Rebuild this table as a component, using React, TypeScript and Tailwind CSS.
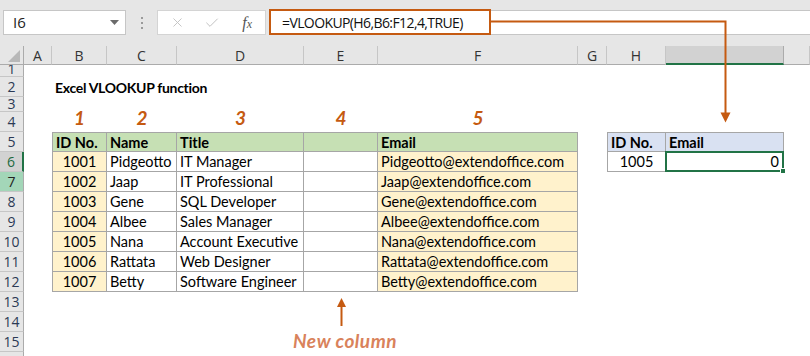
import React from "react";
import { X, Check } from "lucide-react";

const COLS = ["A", "B", "C", "D", "E", "F", "G", "H", "I", "J"];

const people: [number, string, string][] = [
  [1001, "Pidgeotto", "IT Manager"],
  [1002, "Jaap", "IT Professional"],
  [1003, "Gene", "SQL Developer"],
  [1004, "Albee", "Sales Manager"],
  [1005, "Nana", "Account Executive"],
  [1006, "Rattata", "Web Designer"],
  [1007, "Betty", "Software Engineer"],
];

const ROWS = [1, 2, 3, 4, 5, 6, 7, 8, 9, 10, 11, 12, 13, 14, 15, 16];

function RowHeader({ r }: { r: number }) {
  let cls =
    "flex justify-center overflow-hidden border-b border-b-[#c6c6c6] text-[14px] font-['Open_Sans',sans-serif] ";
  if (r === 6) cls += "bg-[#d2d2d2] border-r-2 border-r-[#217346] text-[#1d6a3f]";
  else if (r === 7) cls += "bg-[#a3d6b8] border-r border-r-[#ababab] text-[#222]";
  else cls += "bg-[#e6e6e6] border-r border-r-[#ababab] text-[#2b3a55]";
  if (r === 1 || r === 3) cls += " items-end leading-[14px]";
  else if (r === 16) cls += " items-start leading-[20px]";
  else cls += " items-center leading-[20px]";
  return <div className={cls}>{r === 16 ? "" : r}</div>;
}

function tableBorder(r: number, c: number) {
  let s = "border-r border-b border-[#a6a6a6]";
  if (r === 5) s += " border-t";
  if (c === 1) s += " border-l";
  return s;
}

function rightBorder(r: number, c: number) {
  let s = "border-r border-b border-[#a6a6a6]";
  if (r === 5) s += " border-t";
  if (c === 7) s += " border-l";
  return s;
}

function Cell({ r, c }: { r: number; c: number }) {
  const base =
    "relative flex items-center pt-[1px] text-[14.5px] text-black whitespace-nowrap min-w-0";
  if (r === 2 && c === 1) {
    return (
      <div className={base + " overflow-visible z-10"}>
        <span className="pl-[3px] font-bold text-[14px] tracking-[-0.3px]">
          Excel VLOOKUP function
        </span>
      </div>
    );
  }
  if (r === 4 && c >= 1 && c <= 5) {
    return (
      <div className={base + " justify-center overflow-visible"}>
        <span className="italic font-bold text-[19px] text-[#c55a11] leading-[20px] -mt-[9px]">
          {c}
        </span>
      </div>
    );
  }
  if (r === 5 && c >= 1 && c <= 5) {
    const labels = ["", "ID No.", "Name", "Title", "", "Email"];
    return (
      <div className={base + " bg-[#c6e0b4] font-bold pl-[3px] " + tableBorder(r, c)}>
        {labels[c]}
      </div>
    );
  }
  if (r >= 6 && r <= 12 && c >= 1 && c <= 5) {
    const p = people[r - 6];
    const b = tableBorder(r, c);
    if (c === 1)
      return <div className={base + " bg-[#fff2cc] justify-center " + b}>{p[0]}</div>;
    if (c === 2) return <div className={base + " pl-[3px] " + b}>{p[1]}</div>;
    if (c === 3) return <div className={base + " pl-[3px] " + b}>{p[2]}</div>;
    if (c === 4) return <div className={base + " " + b}></div>;
    return (
      <div className={base + " bg-[#fff2cc] pl-[3px] " + b}>{p[1] + "@extendoffice.com"}</div>
    );
  }
  if (r === 5 && (c === 7 || c === 8)) {
    return (
      <div className={base + " bg-[#d9e1f2] font-bold pl-[3px] " + rightBorder(r, c)}>
        {c === 7 ? "ID No." : "Email"}
      </div>
    );
  }
  if (r === 6 && c === 7) {
    return <div className={base + " justify-center " + rightBorder(r, c)}>1005</div>;
  }
  if (r === 6 && c === 8) {
    return (
      <div className={base + " justify-end pr-[4px] " + rightBorder(r, c)}>
        0
        <div className="absolute -left-[1px] -top-[1px] -right-[1px] -bottom-[1px] border-2 border-[#217346]" />
        <div className="absolute -right-[3px] -bottom-[3px] w-[6px] h-[6px] bg-[#217346] border border-white" />
      </div>
    );
  }
  if (r === 15 && c === 4) {
    return (
      <div className={base + " justify-center overflow-visible z-10"}>
        <span className="italic font-bold text-[19px] text-[#d9825b] tracking-[0.5px] -mt-[3px] ml-[8px]">
          New column
        </span>
      </div>
    );
  }
  return <div className={base}></div>;
}

export default function App() {
  return (
    <div className="relative w-[810px] h-[356px] overflow-hidden bg-white font-['Lato',sans-serif]">
      {/* Formula bar area */}
      <div className="flex h-[46px] bg-[#e6e6e6] pt-[10px] items-start">
        <div className="ml-[3px] w-[123px] h-[25px] bg-white border border-[#c6c6c6] flex items-center justify-between pl-[9px] pr-[6px]">
          <span className="text-[15px] text-[#222] font-['Open_Sans',sans-serif]">I6</span>
          <svg width="9" height="5" viewBox="0 0 9 5">
            <polygon points="0,0 9,0 4.5,5" fill="#6b6b6b" />
          </svg>
        </div>
        <div className="w-[31px] h-[25px] flex flex-col items-center justify-center gap-[3px]">
          <div className="w-[2px] h-[2px] bg-[#9a9a9a]" />
          <div className="w-[2px] h-[2px] bg-[#9a9a9a]" />
          <div className="w-[2px] h-[2px] bg-[#9a9a9a]" />
        </div>
        <div className="w-[109px] h-[25px] bg-white border border-[#d4d4d4] flex items-center">
          <div className="w-[36px] flex justify-center pl-[4px]">
            <X size={15} strokeWidth={1.5} color="#c2c2c2" />
          </div>
          <div className="w-[36px] flex justify-center">
            <Check size={16} strokeWidth={1.5} color="#c2c2c2" />
          </div>
          <div className="w-[36px] flex justify-center">
            <span className="font-['Liberation_Serif',serif] italic text-[16px] text-[#555] leading-none">
              f<span className="text-[12px]">x</span>
            </span>
          </div>
        </div>
        <div className="ml-[3px] flex-1 h-[25px] bg-white border-y border-[#c6c6c6] flex items-center">
          <div className="w-[222px] h-[26px] -mt-[1px] border-2 border-[#c55a11] flex items-center pl-[11px] text-[14px] tracking-[-0.6px] text-[#111] font-['Open_Sans',sans-serif]">
            =VLOOKUP(H6,B6:F12,4,TRUE)
          </div>
        </div>
      </div>

      {/* Sheet grid */}
      <div className="grid grid-cols-[24px_28px_55px_70px_127px_74px_200px_29px_59px_118px_26px] grid-rows-[19px_12px_20px_15px_20px_20px_20px_20px_20px_20px_20px_20px_20px_20px_20px_20px_20px]">
        <div className="relative bg-[#e6e6e6] border-r border-r-[#ababab] border-b border-b-[#ababab]">
          <svg width="24" height="19" viewBox="0 0 24 19" className="absolute left-0 top-0">
            <polygon points="20,4 20,16 8,16" fill="#b8b8b8" />
          </svg>
        </div>
        {COLS.map((l, i) =>
          i === 8 ? (
            <div
              key={l}
              className="bg-[#d2d2d2] border-b-2 border-b-[#217346] border-r border-r-[#ababab]"
            />
          ) : (
            <div
              key={l}
              className="flex items-center justify-center bg-[#e6e6e6] border-b border-b-[#ababab] border-r border-r-[#c6c6c6] text-[14px] text-[#333] font-['Open_Sans',sans-serif]"
            >
              {i === 9 ? "" : l}
            </div>
          )
        )}
        {ROWS.map((r) => (
          <React.Fragment key={r}>
            <RowHeader r={r} />
            {COLS.map((_, c) => (
              <Cell key={c} r={r} c={c} />
            ))}
          </React.Fragment>
        ))}
      </div>

      {/* Annotation arrows */}
      <svg
        className="absolute left-0 top-0 pointer-events-none"
        width="810"
        height="356"
        viewBox="0 0 810 356"
      >
        <polyline points="491,21.5 725.5,21.5 725.5,114" fill="none" stroke="#c55a11" strokeWidth="2" />
        <polygon points="720.5,112.5 730.5,112.5 725.5,122.5" fill="#c55a11" />
        <line x1="341.5" y1="326" x2="341.5" y2="305" stroke="#c55a11" strokeWidth="2" />
        <polygon points="337,307 346,307 341.5,298" fill="#c55a11" />
      </svg>
    </div>
  );
}
